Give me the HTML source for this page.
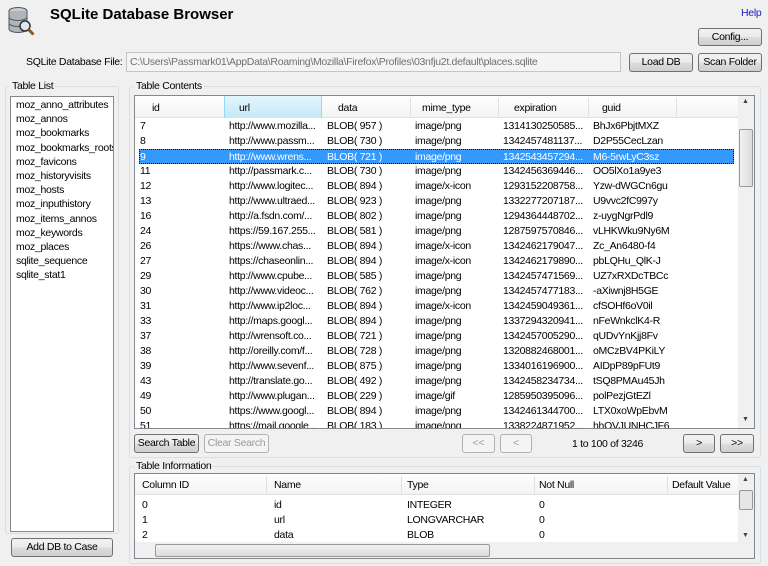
<!DOCTYPE html>
<html><head><meta charset="utf-8"><style>
*{box-sizing:border-box;margin:0;padding:0}
body{width:768px;height:566px;background:#f0f0f0;font-family:"Liberation Sans",sans-serif;font-size:10.5px;letter-spacing:-0.3px;color:#000;position:relative;overflow:hidden}
.a{position:absolute;white-space:nowrap}
.btn{position:absolute;border:1px solid #707070;border-radius:3px;background:linear-gradient(#f2f2f2,#ebebeb 50%,#dddddd 51%,#cfcfcf);text-align:center;line-height:17px;white-space:nowrap}
.dis{border-color:#adb2b5;color:#9a9a9a;background:#f4f4f4}
.grp{position:absolute;border:1px solid #d5dfe5;border-radius:3px}
.lbl{position:absolute;background:#f0f0f0;padding:0 2px}
.list{position:absolute;background:#fff;border:1px solid #828790}
.row{position:absolute;left:0;height:15px;line-height:15px;width:600px;white-space:nowrap}
.row span{position:absolute}
.sel{background:#3399ff;color:#fff;border:1px dotted #000;}
.vs{position:absolute;background:#f0f0f0;width:16px}
</style></head><body>
<svg class="a" style="left:6px;top:6px" width="30" height="32" viewBox="0 0 30 32">
<ellipse cx="12" cy="5" rx="9" ry="3.5" fill="#c8ccd2" stroke="#555"/>
<path d="M3 5v18c0 2 4 3.5 9 3.5s9-1.5 9-3.5V5" fill="#b0b5bd" stroke="#555"/>
<path d="M3 11c0 2 4 3.5 9 3.5s9-1.5 9-3.5M3 17c0 2 4 3.5 9 3.5s9-1.5 9-3.5" fill="none" stroke="#555"/>
<circle cx="19" cy="20" r="5" fill="#dfe8f0" stroke="#333" stroke-width="1.5"/>
<path d="M22.5 23.5l5 5" stroke="#8a5a1a" stroke-width="3"/>
</svg>
<div class="a" style="left:50px;top:6px;font-size:15px;font-weight:bold;letter-spacing:0">SQLite Database Browser</div>
<div class="a" style="left:741px;top:7px;color:#1a1ad0">Help</div>
<div class="btn" style="left:698px;top:28px;width:64px;height:18px">Config...</div>
<div class="a" style="left:26px;top:56px">SQLite Database File:</div>
<div class="a" style="left:126px;top:52px;width:495px;height:20px;border:1px solid #c5c5c5;background:#f4f4f4;color:#707070;line-height:18px;padding-left:3px;overflow:hidden">C:\Users\Passmark01\AppData\Roaming\Mozilla\Firefox\Profiles\03nfju2t.default\places.sqlite</div>
<div class="btn" style="left:629px;top:53px;width:64px;height:19px">Load DB</div>
<div class="btn" style="left:698px;top:53px;width:64px;height:19px">Scan Folder</div>

<div class="grp" style="left:5px;top:86px;width:114px;height:448px"></div>
<div class="lbl" style="left:10px;top:80px">Table List</div>
<div class="list" style="left:10px;top:96px;width:104px;height:436px;line-height:14.2px;padding:1px 0 0 5px;white-space:nowrap;overflow:hidden">
moz_anno_attributes<br>moz_annos<br>moz_bookmarks<br>moz_bookmarks_roots<br>moz_favicons<br>moz_historyvisits<br>moz_hosts<br>moz_inputhistory<br>moz_items_annos<br>moz_keywords<br>moz_places<br>sqlite_sequence<br>sqlite_stat1</div>
<div class="btn" style="left:11px;top:538px;width:102px;height:19px">Add DB to Case</div>

<div class="grp" style="left:129px;top:86px;width:632px;height:372px"></div>
<div class="lbl" style="left:134px;top:80px">Table Contents</div>
<div class="list" style="left:134px;top:95px;width:621px;height:334px;overflow:hidden">
<div class="a" style="left:0;top:0;width:603px;height:22px;background:linear-gradient(#fff,#f3f3f3);border-bottom:1px solid #e0e0e0"></div>
<div class="a" style="left:89px;top:0;width:98px;height:22px;background:linear-gradient(#e3f6fd,#c4e9f8);border-right:1px solid #96d9f9;border-left:1px solid #96d9f9"></div>
<div class="a" style="left:275px;top:2px;width:1px;height:18px;background:#e0e0e0"></div>
<div class="a" style="left:363px;top:2px;width:1px;height:18px;background:#e0e0e0"></div>
<div class="a" style="left:453px;top:2px;width:1px;height:18px;background:#e0e0e0"></div>
<div class="a" style="left:541px;top:2px;width:1px;height:18px;background:#e0e0e0"></div>
<div class="a" style="top:6px;left:17px">id</div><div class="a" style="top:6px;left:104px">url</div><div class="a" style="top:6px;left:203px">data</div><div class="a" style="top:6px;left:287px">mime_type</div><div class="a" style="top:6px;left:379px">expiration</div><div class="a" style="top:6px;left:467px">guid</div>
<div class="a" style="left:0;top:23px">
<div class="row" style="top:0"><span style="left:5px">7</span><span style="left:94px">http://www.mozilla...</span><span style="left:192px">BLOB( 957 )</span><span style="left:280px">image/png</span><span style="left:368px">1314130250585...</span><span style="left:458px">BhJx6PbjtMXZ</span></div>
<div class="row" style="top:15px"><span style="left:5px">8</span><span style="left:94px">http://www.passm...</span><span style="left:192px">BLOB( 730 )</span><span style="left:280px">image/png</span><span style="left:368px">1342457481137...</span><span style="left:458px">D2P55CecLzan</span></div>
<div class="row sel" style="top:30px;left:4px;width:595px"><span style="left:0px">9</span><span style="left:89px">http://www.wrens...</span><span style="left:187px">BLOB( 721 )</span><span style="left:275px">image/png</span><span style="left:363px">1342543457294...</span><span style="left:453px">M6-5rwLyC3sz</span></div>
<div class="row" style="top:45px"><span style="left:5px">11</span><span style="left:94px">http://passmark.c...</span><span style="left:192px">BLOB( 730 )</span><span style="left:280px">image/png</span><span style="left:368px">1342456369446...</span><span style="left:458px">OO5lXo1a9ye3</span></div>
<div class="row" style="top:60px"><span style="left:5px">12</span><span style="left:94px">http://www.logitec...</span><span style="left:192px">BLOB( 894 )</span><span style="left:280px">image/x-icon</span><span style="left:368px">1293152208758...</span><span style="left:458px">Yzw-dWGCn6gu</span></div>
<div class="row" style="top:75px"><span style="left:5px">13</span><span style="left:94px">http://www.ultraed...</span><span style="left:192px">BLOB( 923 )</span><span style="left:280px">image/png</span><span style="left:368px">1332277207187...</span><span style="left:458px">U9vvc2fC997y</span></div>
<div class="row" style="top:90px"><span style="left:5px">16</span><span style="left:94px">http://a.fsdn.com/...</span><span style="left:192px">BLOB( 802 )</span><span style="left:280px">image/png</span><span style="left:368px">1294364448702...</span><span style="left:458px">z-uygNgrPdl9</span></div>
<div class="row" style="top:105px"><span style="left:5px">24</span><span style="left:94px">https://59.167.255...</span><span style="left:192px">BLOB( 581 )</span><span style="left:280px">image/png</span><span style="left:368px">1287597570846...</span><span style="left:458px">vLHKWku9Ny6M</span></div>
<div class="row" style="top:120px"><span style="left:5px">26</span><span style="left:94px">https://www.chas...</span><span style="left:192px">BLOB( 894 )</span><span style="left:280px">image/x-icon</span><span style="left:368px">1342462179047...</span><span style="left:458px">Zc_An6480-f4</span></div>
<div class="row" style="top:135px"><span style="left:5px">27</span><span style="left:94px">https://chaseonlin...</span><span style="left:192px">BLOB( 894 )</span><span style="left:280px">image/x-icon</span><span style="left:368px">1342462179890...</span><span style="left:458px">pbLQHu_QlK-J</span></div>
<div class="row" style="top:150px"><span style="left:5px">29</span><span style="left:94px">http://www.cpube...</span><span style="left:192px">BLOB( 585 )</span><span style="left:280px">image/png</span><span style="left:368px">1342457471569...</span><span style="left:458px">UZ7xRXDcTBCc</span></div>
<div class="row" style="top:165px"><span style="left:5px">30</span><span style="left:94px">http://www.videoc...</span><span style="left:192px">BLOB( 762 )</span><span style="left:280px">image/png</span><span style="left:368px">1342457477183...</span><span style="left:458px">-aXiwnj8H5GE</span></div>
<div class="row" style="top:180px"><span style="left:5px">31</span><span style="left:94px">http://www.ip2loc...</span><span style="left:192px">BLOB( 894 )</span><span style="left:280px">image/x-icon</span><span style="left:368px">1342459049361...</span><span style="left:458px">cfSOHf6oV0il</span></div>
<div class="row" style="top:195px"><span style="left:5px">33</span><span style="left:94px">http://maps.googl...</span><span style="left:192px">BLOB( 894 )</span><span style="left:280px">image/png</span><span style="left:368px">1337294320941...</span><span style="left:458px">nFeWnkclK4-R</span></div>
<div class="row" style="top:210px"><span style="left:5px">37</span><span style="left:94px">http://wrensoft.co...</span><span style="left:192px">BLOB( 721 )</span><span style="left:280px">image/png</span><span style="left:368px">1342457005290...</span><span style="left:458px">qUDvYnKjj8Fv</span></div>
<div class="row" style="top:225px"><span style="left:5px">38</span><span style="left:94px">http://oreilly.com/f...</span><span style="left:192px">BLOB( 728 )</span><span style="left:280px">image/png</span><span style="left:368px">1320882468001...</span><span style="left:458px">oMCzBV4PKiLY</span></div>
<div class="row" style="top:240px"><span style="left:5px">39</span><span style="left:94px">http://www.sevenf...</span><span style="left:192px">BLOB( 875 )</span><span style="left:280px">image/png</span><span style="left:368px">1334016196900...</span><span style="left:458px">AIDpP89pFUt9</span></div>
<div class="row" style="top:255px"><span style="left:5px">43</span><span style="left:94px">http://translate.go...</span><span style="left:192px">BLOB( 492 )</span><span style="left:280px">image/png</span><span style="left:368px">1342458234734...</span><span style="left:458px">tSQ8PMAu45Jh</span></div>
<div class="row" style="top:270px"><span style="left:5px">49</span><span style="left:94px">http://www.plugan...</span><span style="left:192px">BLOB( 229 )</span><span style="left:280px">image/gif</span><span style="left:368px">1285950395096...</span><span style="left:458px">polPezjGtEZl</span></div>
<div class="row" style="top:285px"><span style="left:5px">50</span><span style="left:94px">https://www.googl...</span><span style="left:192px">BLOB( 894 )</span><span style="left:280px">image/png</span><span style="left:368px">1342461344700...</span><span style="left:458px">LTX0xoWpEbvM</span></div>
<div class="row" style="top:300px"><span style="left:5px">51</span><span style="left:94px">https://mail.google...</span><span style="left:192px">BLOB( 183 )</span><span style="left:280px">image/png</span><span style="left:368px">1338224871952...</span><span style="left:458px">hhOVJUNHCJF6</span></div>
</div>
<div class="vs" style="left:603px;top:0;height:332px"></div>
<div class="a" style="left:607px;top:2px;font-size:7px;color:#444">▲</div>
<div class="a" style="left:604px;top:33px;width:14px;height:58px;border:1px solid #999;border-radius:2px;background:linear-gradient(90deg,#f2f2f2,#dcdcdc)"></div>
<div class="a" style="left:607px;top:320px;font-size:7px;color:#444">▼</div>
</div>
<div class="btn" style="left:134px;top:434px;width:65px;height:19px">Search Table</div>
<div class="btn dis" style="left:204px;top:434px;width:65px;height:19px">Clear Search</div>
<div class="btn dis" style="left:462px;top:434px;width:33px;height:19px">&lt;&lt;</div>
<div class="btn dis" style="left:500px;top:434px;width:32px;height:19px">&lt;</div>
<div class="a" style="left:572px;top:438px">1 to 100 of 3246</div>
<div class="btn" style="left:683px;top:434px;width:32px;height:19px">&gt;</div>
<div class="btn" style="left:720px;top:434px;width:34px;height:19px">&gt;&gt;</div>

<div class="grp" style="left:129px;top:466px;width:632px;height:98px"></div>
<div class="lbl" style="left:134px;top:460px">Table Information</div>
<div class="list" style="left:134px;top:473px;width:621px;height:86px;overflow:hidden">
<div class="a" style="left:0;top:0;width:603px;height:21px;background:linear-gradient(#fff,#f3f3f3);border-bottom:1px solid #e0e0e0"></div>
<div class="a" style="left:131px;top:2px;width:1px;height:17px;background:#e0e0e0"></div>
<div class="a" style="left:266px;top:2px;width:1px;height:17px;background:#e0e0e0"></div>
<div class="a" style="left:399px;top:2px;width:1px;height:17px;background:#e0e0e0"></div>
<div class="a" style="left:532px;top:2px;width:1px;height:17px;background:#e0e0e0"></div>
<div class="a" style="left:7px;top:5px">Column ID</div><div class="a" style="left:139px;top:5px">Name</div><div class="a" style="left:272px;top:5px">Type</div><div class="a" style="left:404px;top:5px">Not Null</div><div class="a" style="left:537px;top:5px">Default Value</div>
<div class="a" style="left:7px;top:25px">0</div><div class="a" style="left:139px;top:25px">id</div><div class="a" style="left:272px;top:25px">INTEGER</div><div class="a" style="left:404px;top:25px">0</div>
<div class="a" style="left:7px;top:40px">1</div><div class="a" style="left:139px;top:40px">url</div><div class="a" style="left:272px;top:40px">LONGVARCHAR</div><div class="a" style="left:404px;top:40px">0</div>
<div class="a" style="left:7px;top:55px">2</div><div class="a" style="left:139px;top:55px">data</div><div class="a" style="left:272px;top:55px">BLOB</div><div class="a" style="left:404px;top:55px">0</div>
<div class="vs" style="left:603px;top:0;height:70px"></div>
<div class="a" style="left:607px;top:2px;font-size:7px;color:#444">▲</div>
<div class="a" style="left:604px;top:16px;width:14px;height:20px;border:1px solid #999;border-radius:2px;background:#e6e6e6"></div>
<div class="a" style="left:607px;top:58px;font-size:7px;color:#444">▼</div>
<div class="a" style="left:0;top:68px;width:619px;height:17px;background:#f0f0f0"></div>
<div class="a" style="left:20px;top:70px;width:335px;height:13px;border:1px solid #999;border-radius:2px;background:linear-gradient(#f2f2f2,#dcdcdc)"></div>
</div>
</body></html>
